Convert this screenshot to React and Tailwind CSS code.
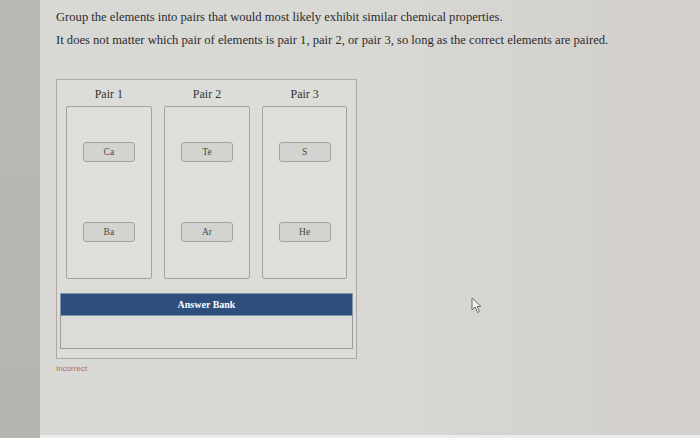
import React from 'react';

const pairs = [
  { label: 'Pair 1', top: 'Ca', bottom: 'Ba', width: 'w-[86px]' },
  { label: 'Pair 2', top: 'Te', bottom: 'Ar', width: 'w-[87px]' },
  { label: 'Pair 3', top: 'S', bottom: 'He', width: 'w-[85px]' },
];

const Chip = ({ children }) => (
  <div className="w-[52px] h-[20px] flex items-center justify-center bg-[#d3d4d0] border border-[#a3a4a0] rounded-[3px] text-[9.5px] text-[#4a4a4a]">
    {children}
  </div>
);

const App = () => {
  return (
    <div
      className="relative w-[700px] h-[438px] flex overflow-hidden text-[#333]"
      style={{ fontFamily: '"Liberation Serif", "Times New Roman", serif' }}
    >
      {/* darker strip on the left */}
      <div className="w-[40px] h-full bg-linear-to-b from-[#b7bab5] to-[#b2b5b0]" />

      <div className="flex-1 flex flex-col bg-linear-to-r from-[#d8d9d5] via-[#d8d8d4] to-[#d2cfcd]">
        <div className="flex-1 pl-[16px] pt-[9px]">
          {/* Instructions */}
          <p className="text-[12.6px] leading-[16px] text-[#2c2c2c]">
            Group the elements into pairs that would most likely exhibit similar chemical properties.
          </p>
          <p className="mt-[7px] text-[12.6px] leading-[16px] text-[#2c2c2c]">
            It does not matter which pair of elements is pair 1, pair 2, or pair 3, so long as the correct elements are paired.
          </p>

          {/* Sorting box */}
          <div className="mt-[31px] w-[301px] h-[280px] border border-[#b3a5a2] bg-[#dcddd9] flex flex-col">
            <div className="flex gap-[12px] px-[9px] pt-[6px]">
              {pairs.map((p) => (
                <div key={p.label} className={`${p.width} flex flex-col items-center`}>
                  <div className="h-[16px] text-[12px] leading-[16px] text-[#333]">{p.label}</div>
                  <div className="mt-[4px] w-full h-[173px] border border-[#a2a39f] rounded-[2px] bg-[#dedfdb] flex flex-col items-center pt-[35px]">
                    <Chip>{p.top}</Chip>
                    <div className="h-[60px]" />
                    <Chip>{p.bottom}</Chip>
                  </div>
                </div>
              ))}
            </div>

            {/* Answer bank */}
            <div className="mt-[14px] mx-[3px] flex flex-col">
              <div className="h-[23px] bg-[#2e4f7d] border border-[#7f93ad] flex items-center justify-center text-[10px] font-bold text-white">
                Answer Bank
              </div>
              <div className="h-[33px] border border-t-0 border-[#9c9c98] bg-[#dbdcd8]" />
            </div>
          </div>

          <div className="mt-[4px] text-[8px] text-[#b36a5b]" style={{ fontFamily: '"Liberation Sans", Arial, sans-serif' }}>
            Incorrect
          </div>
        </div>
        <div className="h-[3px] bg-[#ecedeb]" />
      </div>

      {/* mouse pointer */}
      <svg className="absolute left-[471px] top-[297px]" width="12" height="17" viewBox="0 0 12 17">
        <path d="M1 1 L1 13 L4 10 L6.5 15.5 L8.5 14.5 L6 9.5 L10 9.5 Z" fill="#f2f2f0" stroke="#6f6f6f" strokeWidth="1" strokeLinejoin="round" />
      </svg>
    </div>
  );
};

export default App;
